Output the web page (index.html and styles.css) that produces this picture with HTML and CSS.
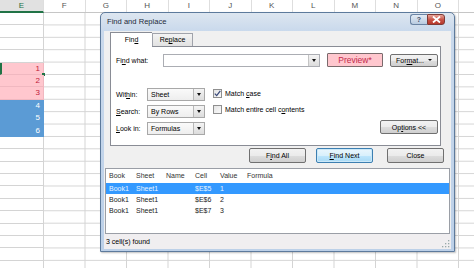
FILE: index.html
```html
<!DOCTYPE html>
<html>
<head>
<meta charset="utf-8">
<link rel="stylesheet" href="styles.css">
</head>
<body>
<div class="sheet">
  <div class="colheads">
    <div class="ch ch-e">E</div>
    <div class="ch">F</div><div class="ch">G</div><div class="ch">H</div><div class="ch">I</div>
    <div class="ch">J</div><div class="ch">K</div><div class="ch">L</div><div class="ch">M</div>
    <div class="ch">N</div><div class="ch">O</div><div class="ch"></div>
  </div>
  <div class="cells">
    <div class="col-e">
      <div class="c"></div><div class="c"></div><div class="c"></div><div class="c"></div>
      <div class="c pink active">1<span class="handle"></span></div>
      <div class="c pink">2</div>
      <div class="c pink">3</div>
      <div class="c blue">4</div>
      <div class="c blue">5</div>
      <div class="c blue">6</div>
      <div class="c"></div><div class="c"></div><div class="c"></div><div class="c"></div>
      <div class="c"></div><div class="c"></div><div class="c"></div><div class="c"></div>
      <div class="c"></div><div class="c"></div><div class="c"></div>
    </div>
    <div class="rest"></div>
  </div>
</div>

<div class="dlg">
  <div class="titlebar">
    <span class="title">Find and Replace</span>
    <div class="caps">
      <span class="cap help">?</span>
      <span class="cap close"><svg width="9" height="7" viewBox="0 0 9 7"><path d="M1 0.5 L8 6.5 M8 0.5 L1 6.5" stroke="#fff" stroke-width="1.8"/></svg></span>
    </div>
  </div>
  <div class="client">
    <div class="tabs">
      <div class="tab active">Fin<u>d</u></div>
      <div class="tab">Re<u>p</u>lace</div>
    </div>
    <div class="panel">
      <div class="row1">
        <span class="lbl-what">Fi<u>n</u>d what:</span>
        <div class="combo"><span class="arrow"><i class="tri"></i></span></div>
        <span class="btn preview">Preview*</span>
        <span class="btn format"><span>For<u>m</u>at...</span><i class="tri small"></i></span>
      </div>
      <div class="opts">
        <div class="selects">
          <div class="srow"><span class="slbl">Wit<u>h</u>in:</span><div class="sel"><span>Sheet</span><span class="arrow"><i class="tri"></i></span></div></div>
          <div class="srow"><span class="slbl"><u>S</u>earch:</span><div class="sel"><span>By Rows</span><span class="arrow"><i class="tri"></i></span></div></div>
          <div class="srow"><span class="slbl"><u>L</u>ook in:</span><div class="sel"><span>Formulas</span><span class="arrow"><i class="tri"></i></span></div></div>
        </div>
        <div class="checks">
          <div class="chk"><span class="box"><svg width="7" height="7" viewBox="0 0 7 7"><path d="M0.8 3.6 L2.7 5.6 L6.3 0.8" fill="none" stroke="#3a4a7a" stroke-width="1.3"/></svg></span><span>Match <u>c</u>ase</span></div>
          <div class="chk"><span class="box"></span><span>Match entire cell c<u>o</u>ntents</span></div>
        </div>
        <span class="btn options"><span>Op<u>t</u>ions &lt;&lt;</span></span>
      </div>
    </div>
    <div class="actions">
      <span class="btn act"><span>F<u>i</u>nd All</span></span>
      <span class="btn act default"><span><u>F</u>ind Next</span></span>
      <span class="btn act close-btn">Close</span>
    </div>
    <div class="results">
      <div class="rrow rhead">
        <span class="k1">Book</span><span class="k2">Sheet</span><span class="k3">Name</span><span class="k4">Cell</span><span class="k5">Value</span><span class="k6">Formula</span>
      </div>
      <div class="rrow sel-row">
        <span class="k1">Book1</span><span class="k2">Sheet1</span><span class="k3"></span><span class="k4">$E$5</span><span class="k5">1</span><span class="k6"></span>
      </div>
      <div class="rrow">
        <span class="k1">Book1</span><span class="k2">Sheet1</span><span class="k3"></span><span class="k4">$E$6</span><span class="k5">2</span><span class="k6"></span>
      </div>
      <div class="rrow">
        <span class="k1">Book1</span><span class="k2">Sheet1</span><span class="k3"></span><span class="k4">$E$7</span><span class="k5">3</span><span class="k6"></span>
      </div>
    </div>
    <div class="status">
      <span>3 cell(s) found</span>
      <svg class="grip" width="8" height="8" viewBox="0 0 8 8">
        <rect x="6" y="0" width="1.3" height="1.3" fill="#9aa"/>
        <rect x="3" y="3" width="1.3" height="1.3" fill="#9aa"/><rect x="6" y="3" width="1.3" height="1.3" fill="#9aa"/>
        <rect x="0" y="6" width="1.3" height="1.3" fill="#9aa"/><rect x="3" y="6" width="1.3" height="1.3" fill="#9aa"/><rect x="6" y="6" width="1.3" height="1.3" fill="#9aa"/>
      </svg>
    </div>
  </div>
</div>
</body>
</html>
```

FILE: styles.css
```css
* { box-sizing: border-box; }
html, body { margin: 0; padding: 0; }
body {
  width: 474px;
  height: 268px;
  overflow: hidden;
  position: relative;
  background: #fff;
  font-family: "Liberation Sans", Arial, sans-serif;
}

/* ---------- spreadsheet ---------- */
.sheet { width: 474px; height: 268px; overflow: hidden; }
.colheads {
  display: flex;
  height: 13px;
  border-bottom: 1px solid #c6c6c6;
  background: #fff;
}
.ch {
  flex: 0 0 41.5px;
  border-right: 1px solid #dedede;
  font-size: 8px;
  color: #555;
  text-align: center;
  line-height: 12px;
}
.ch-e {
  flex-basis: 44px;
  background: #e1e1e1;
  color: #217346;
  border-bottom: 2px solid #217346;
  line-height: 11px;
  height: 13px;
}
.cells { display: flex; height: 255px; }
.col-e { flex: 0 0 44px; }
.c {
  height: 12.4px;
  border-right: 1px solid #d4d4d4;
  border-bottom: 1px solid #d4d4d4;
  font-size: 8px;
  line-height: 11.4px;
  text-align: right;
  padding-right: 3px;
  position: relative;
}
.pink { background: #ffc7ce; color: #c0203a; border-bottom-color: #f0b8c0; border-right-color: #f0b8c0; }
.blue { background: #5b9bd5; color: #fff; border-bottom-color: #5b9bd5; border-right-color: #5b9bd5; }
.active { border-left: 2px solid #217346; }
.handle {
  position: absolute;
  right: -2px;
  bottom: -2px;
  width: 3px;
  height: 3px;
  background: #217346;
}
.rest {
  flex: 1;
  background-image:
    linear-gradient(to right, transparent calc(100% - 1px), #d4d4d4 calc(100% - 1px)),
    linear-gradient(to bottom, transparent calc(100% - 1px), #d4d4d4 calc(100% - 1px));
  background-size: 41.5px 100%, 100% 12.4px;
}

/* ---------- dialog ---------- */
.dlg {
  position: absolute;
  left: 100px;
  top: 12px;
  width: 355px;
  height: 240px;
  border: 1px solid #5d7a9c;
  border-radius: 5px 5px 0 0;
  background: linear-gradient(to bottom, #dde6f0 0px, #c9d9ec 18px, #bcd0e8 100%);
  padding: 0 3px 2px 3px;
  display: flex;
  flex-direction: column;
  font-size: 7px;
  color: #000;
  box-shadow: 1px 1px 2px rgba(0,0,0,0.25);
}
.titlebar {
  height: 18px;
  display: flex;
  align-items: flex-start;
  position: relative;
}
.title {
  font-size: 7.6px;
  margin-left: 3px;
  margin-top: 4px;
  color: #1e2a3a;
}
.caps {
  margin-left: auto;
  margin-right: 6px;
  margin-top: 1px;
  display: flex;
}
.cap {
  height: 11px;
  display: flex;
  align-items: center;
  justify-content: center;
  border: 1px solid #6a83a3;
}
.help {
  width: 17px;
  background: linear-gradient(to bottom, #e3ebf4, #b9cbe0);
  border-radius: 3px 0 0 3px;
  border-right: none;
  font-size: 7px;
  font-weight: bold;
  color: #3c4c66;
}
.close {
  width: 18px;
  background: linear-gradient(to bottom, #e8a599, #c75044 55%, #b8392c);
  border-color: #7e3a36;
  border-radius: 0 3px 3px 0;
}
.client {
  flex: 1;
  background: #f0f0f0;
  display: flex;
  flex-direction: column;
}

/* tabs */
.tabs {
  display: flex;
  align-items: flex-end;
  height: 15px;
  padding-left: 6px;
  position: relative;
  z-index: 2;
}
.tab {
  height: 13px;
  width: 41px;
  border: 1px solid #a0a3ab;
  border-bottom: none;
  background: linear-gradient(to bottom, #f3f3f3, #e2e2e2);
  text-align: center;
  line-height: 12px;
}
.tab.active {
  width: 42px;
  height: 15px;
  margin-bottom: -1px;
  background: #fff;
  border-color: #898c95;
  line-height: 13px;
  border-right: none;
}

.panel {
  height: 100px;
  margin: 0 10px 0 6px;
  border: 1px solid #898c95;
  background: #fff;
  padding: 6px 2px 0 5px;
  position: relative;
  z-index: 1;
}
.row1 {
  display: flex;
  align-items: center;
  height: 14px;
}
.lbl-what { width: 47px; }
.combo {
  width: 157px;
  height: 13px;
  border: 1px solid #abadb3;
  background: #fff;
  display: flex;
  justify-content: flex-end;
}
.arrow {
  width: 11px;
  height: 100%;
  border-left: 1px solid #c4c4c4;
  background: linear-gradient(to bottom, #f4f4f4, #dcdcdc);
  display: flex;
  align-items: center;
  justify-content: center;
}
.tri {
  display: inline-block;
  width: 0;
  height: 0;
  border-left: 2.5px solid transparent;
  border-right: 2.5px solid transparent;
  border-top: 3px solid #111;
}
.tri.small {
  border-left-width: 2px;
  border-right-width: 2px;
  border-top-width: 2.5px;
  margin-left: 4px;
}
.btn {
  display: inline-flex;
  align-items: center;
  justify-content: center;
  height: 14px;
  border: 1px solid #707070;
  border-radius: 2px;
  background: linear-gradient(to bottom, #f2f2f2 0%, #ebebeb 50%, #dddddd 51%, #cfcfcf 100%);
  font-size: 7px;
  color: #000;
  white-space: nowrap;
}
.preview {
  width: 56px;
  margin-left: 7px;
  background: #ffc7ce;
  border-color: #7a6a6c;
  color: #c3284a;
  font-size: 8.5px;
  border-radius: 1px;
}
.format {
  width: 48px;
  height: 13px;
  margin-left: 7px;
}

.opts {
  display: flex;
  margin-top: 21px;
}
.selects { display: flex; flex-direction: column; gap: 4px; }
.srow { display: flex; align-items: center; height: 13px; }
.slbl { width: 31px; }
.sel {
  width: 58px;
  height: 13px;
  border: 1px solid #a8a8a8;
  background: linear-gradient(to bottom, #fafafa, #eeeeee);
  display: flex;
  align-items: center;
  padding-left: 3px;
  justify-content: space-between;
}
.sel .arrow { border-left: 1px solid #b8b8b8; }
.checks {
  display: flex;
  flex-direction: column;
  gap: 4px;
  margin-left: 8px;
}
.chk {
  display: flex;
  align-items: center;
  height: 13px;
  margin-top: -1px;
}
.box {
  width: 9px;
  height: 9px;
  border: 1px solid #8f8f8f;
  background: linear-gradient(to bottom right, #e4e4e4, #fafafa);
  margin-right: 3px;
  display: flex;
  align-items: center;
  justify-content: center;
}
.options {
  width: 58px;
  margin-left: auto;
  align-self: flex-end;
  margin-bottom: 1px;
}

.actions {
  display: flex;
  justify-content: flex-end;
  padding-right: 7px;
  margin-top: 2px;
  height: 15px;
}
.act { width: 57px; height: 15px; margin-left: 10px; }
.act.default {
  border-color: #3c7fb1;
  background: linear-gradient(to bottom, #eaf6fd 0%, #d9f0fc 50%, #bee6fd 51%, #a7d9f5 100%);
  box-shadow: inset 0 0 0 1px #cbe8f8;
}
.act.close-btn { margin-left: 14px; }

.results {
  margin: 5px 1px 0 1px;
  height: 66px;
  border: 1px solid #9a9ea6;
  background: #fff;
  padding-top: 1px;
}
.rrow {
  display: flex;
  height: 11px;
  line-height: 11px;
  padding-left: 3px;
  color: #222;
}
.rhead { height: 13px; line-height: 12px; color: #333; }
.sel-row { background: #3399ff; color: #e8f4ff; }
.k1 { width: 27px; }
.k2 { width: 30px; }
.k3 { width: 29px; }
.k4 { width: 25px; }
.k5 { width: 27px; }
.k6 { width: 40px; }

.status {
  height: 15px;
  display: flex;
  align-items: center;
  padding-left: 2px;
  background: #f0eef0;
  position: relative;
}
.grip { position: absolute; right: 1px; bottom: 1px; }
```
